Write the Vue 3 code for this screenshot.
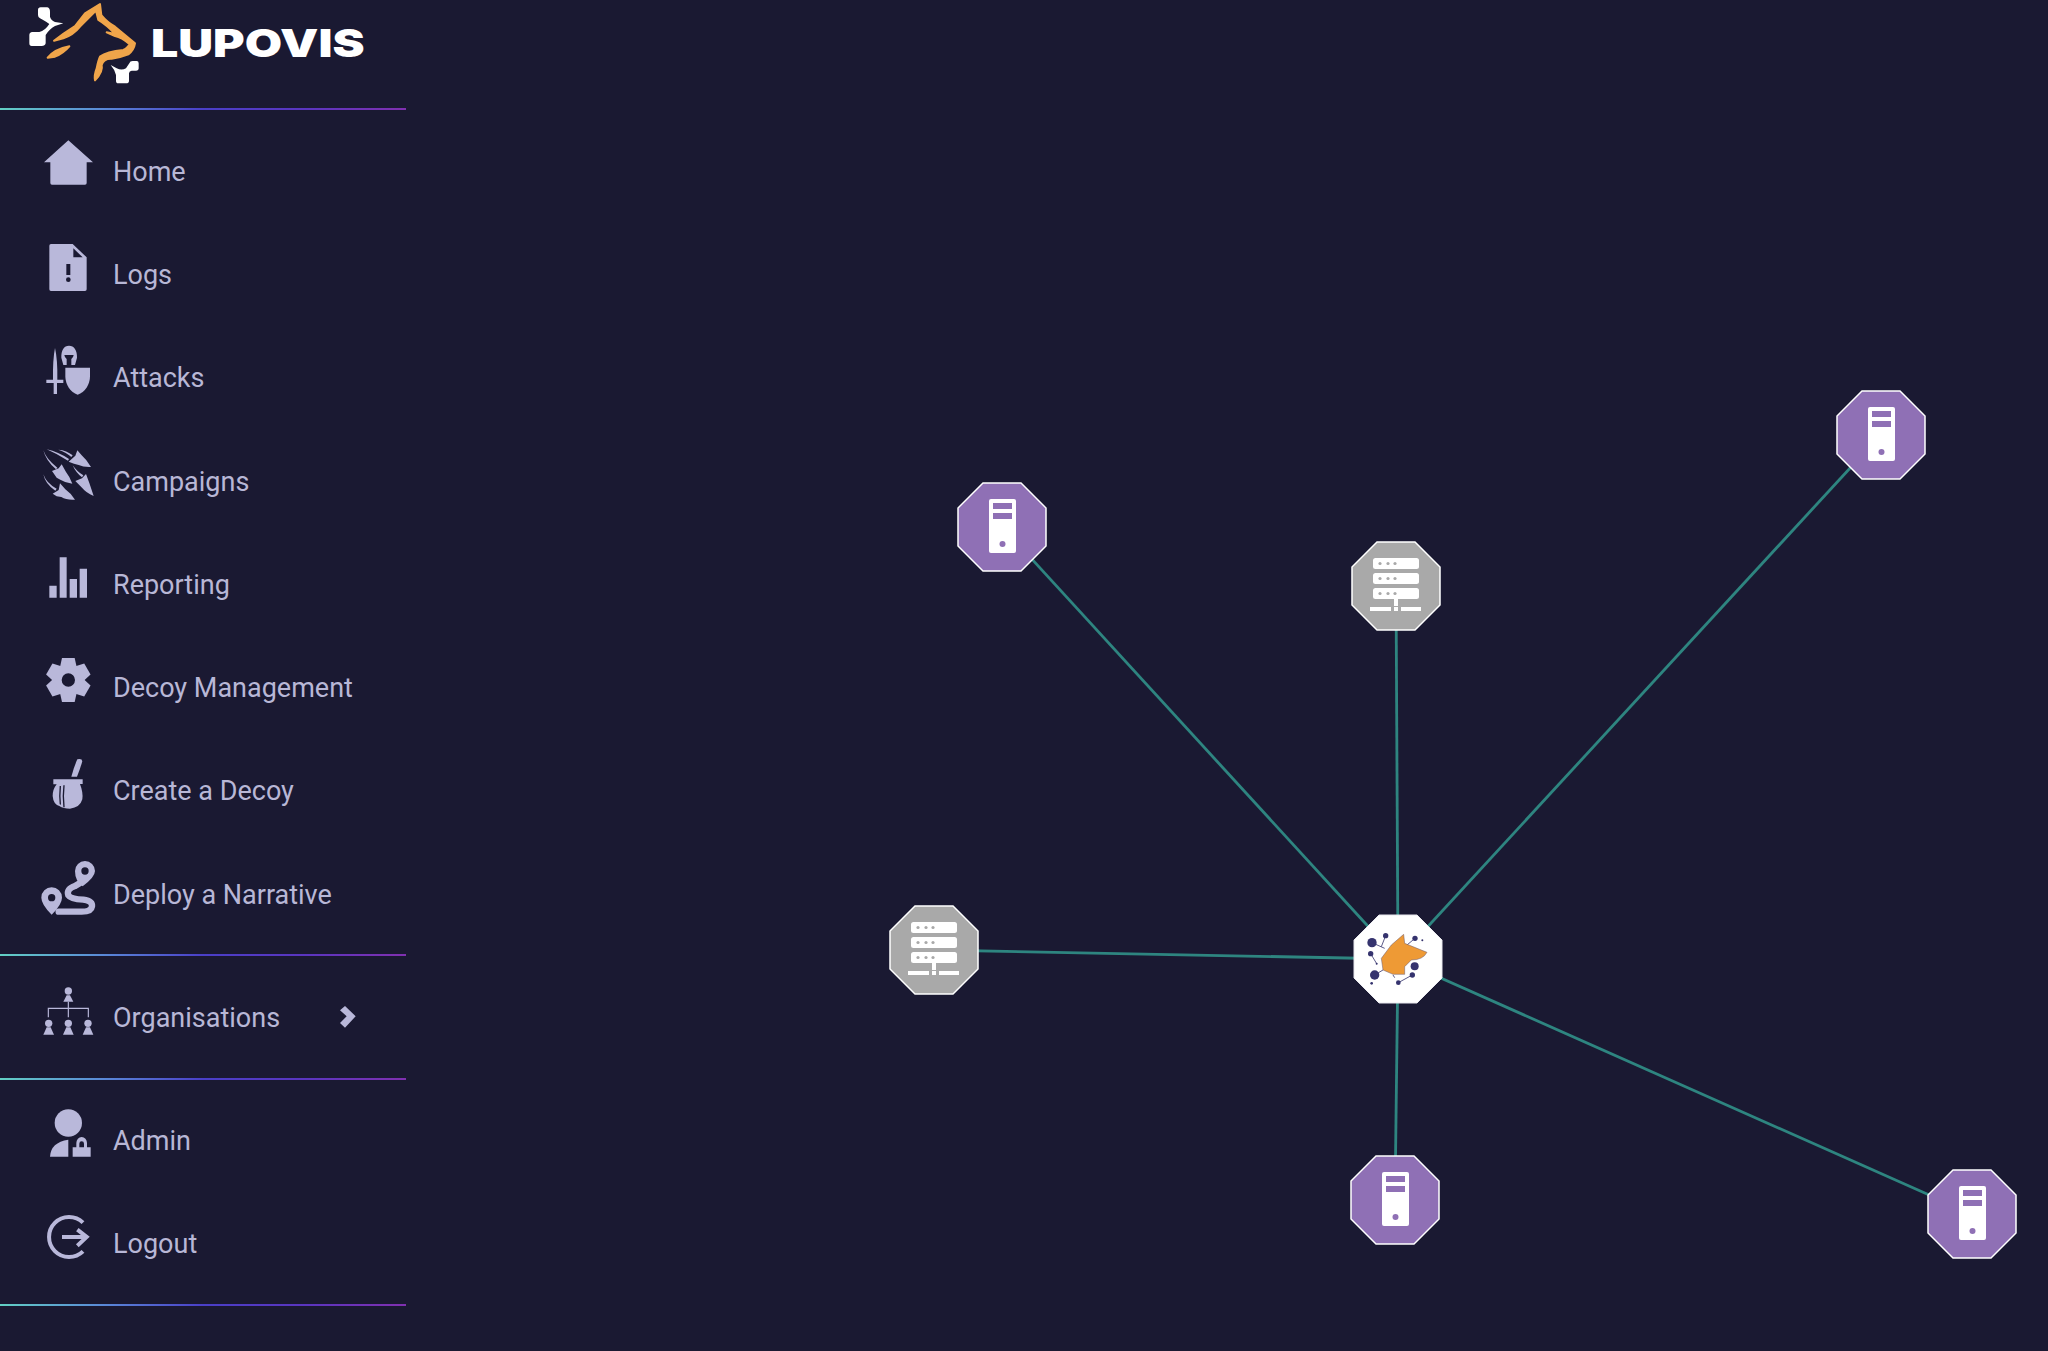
<template>
  <div class="app">
    <aside class="sidebar">
      <header class="brand">
        <svg class="brand-mark" viewBox="0 0 420 270">
          <path class="mark-white" d="M122 22H142Q150 24 150 35V50Q152 60 165 66L190 70L165 78Q150 85 137 105V130Q135 138 125 138H95Q88 138 88 130V105Q88 97 97 96H118Q135 92 148 72Q130 60 120 55Q114 52 114 45V30Q114 22 122 22Z" />
          <path class="mark-white" d="M332 195L350 205Q365 212 378 205L388 190Q390 183 398 183H410Q416 183 416 190V205Q416 212 408 212H395Q388 212 387 220V242Q387 250 378 250H355Q348 250 348 242V225Q345 210 332 195Z" />
          <path class="mark-orange" d="M162 122Q190 100 225 78L255 40L300 12L304 45Q320 65 345 80L405 130Q402 150 385 163Q360 173 335 176Q310 175 305 195Q310 215 285 241Q282 225 290 205Q295 180 300 170Q320 155 370 150Q385 142 388 132Q365 112 345 108L320 97L345 102Q320 75 295 60L288 32L240 80Q220 105 190 115Z" />
          <path class="mark-orange" d="M143 173Q165 147 208 139Q190 160 165 170Z" />
        </svg>
        <span class="brand-name">LUPOVIS</span>
      </header>
      <div class="divider"></div>

      <nav class="nav nav-main">
        <a class="nav-row">
          <svg class="nav-icon" viewBox="114 398 180 180"><path d="M205 420L279 486H260V548Q260 553 255 553H156Q151 553 151 548V486H132Z" /></svg>
          <span>Home</span>
        </a>
        <a class="nav-row">
          <svg class="nav-icon" viewBox="114 708 180 180"><path fill-rule="evenodd" d="M153 732H218L260 772V868Q260 873 255 873H153Q148 873 148 868V737Q148 732 153 732ZM220 745V772H248ZM199 792V825H211V792ZM205 832A7 7 0 1 0 205 846A7 7 0 1 0 205 832Z" /></svg>
          <span>Logs</span>
        </a>
        <a class="nav-row">
          <svg class="nav-icon" viewBox="114 28 180 180">
            <path d="M165 55Q173 90 172 150H190V160H171V193H161V160H139V150H159Q158 90 165 55Z" />
            <path fill-rule="evenodd" d="M207 48C222 48 232 62 231 84L225 106H214V88Q220 84 221 76H193Q194 84 200 88V106H190L184 84C183 62 192 48 207 48Z" />
            <path d="M196 114H270V140C270 165 255 188 233 195C211 188 196 165 196 140Z" />
          </svg>
          <span>Attacks</span>
        </a>
        <a class="nav-row">
          <svg class="nav-icon" viewBox="114 338 180 180">
            <path d="M206 394L226 376L232 360L245 375Q260 388 273 410Q250 411 236 404L222 400Z" />
            <path d="M175 358Q200 360 218 375L214 380Q200 366 175 358Z" />
            <path d="M140 357Q175 365 207 386L204 391Q170 370 140 357Z" />
            <path d="M156 422L176 414L185 402L198 425Q210 440 217 460Q195 457 181 448L170 442Z" />
            <path d="M130 360Q140 388 172 412L168 417Q138 392 130 360Z" />
            <path d="M226 452L246 444L258 431L268 458L281 497Q258 487 246 472Z" />
            <path d="M218 405Q232 425 250 435L246 441Q228 428 218 405Z" />
            <path d="M158 490L176 479L180 459L196 477Q214 490 225 508Q200 510 184 500L170 498Z" />
            <path d="M130 432Q140 460 170 475L166 481Q136 462 130 432Z" />
          </svg>
          <span>Campaigns</span>
        </a>
        <a class="nav-row">
          <svg class="nav-icon" viewBox="114 648 180 180">
            <path d="M148 767H170V803H148ZM179 682H200V803H179ZM209 747H231V803H209ZM239 716H261V803H239Z" />
          </svg>
          <span>Reporting</span>
        </a>
        <a class="nav-row">
          <svg class="nav-icon" viewBox="114 58 180 180">
            <circle class="ring" cx="205" cy="151" r="34" />
            <polygon v-for="a in [0, 60, 120, 180, 240, 300]" :key="a" points="186,85 224,85 230,112 180,112" :transform="`rotate(${a} 205 151)`" />
          </svg>
          <span>Decoy Management</span>
        </a>
        <a class="nav-row">
          <svg class="nav-icon" viewBox="114 368 180 180">
            <path d="M232 390Q246 386 247 396Q240 420 231 442H214Q222 412 232 390Z" />
            <path fill-rule="evenodd" d="M160 450H248V464H240Q250 490 247 510Q240 535 210 538Q190 538 178 530Q160 525 158 500Q158 480 170 465H160ZM179 470Q176 500 179 525L183 526Q180 500 183 470ZM190 468Q186 500 190 534L194 534Q190 500 194 468Z" />
          </svg>
          <span>Create a Decoy</span>
        </a>
        <a class="nav-row">
          <svg class="nav-icon" viewBox="114 677 180 180">
            <path fill-rule="evenodd" d="M155 771A31 31 0 0 1 186 802Q186 822 155 853Q124 822 124 802A31 31 0 0 1 155 771ZM155 791A11 11 0 1 0 155 813A11 11 0 1 0 155 791Z" />
            <path fill-rule="evenodd" d="M255 692A30 30 0 0 1 285 722Q285 740 248 768Q225 752 225 722A30 30 0 0 1 255 692ZM255 711A11 11 0 1 0 255 733A11 11 0 1 0 255 711Z" />
            <path class="route" d="M245 755L225 767Q198 776 205 795Q212 806 250 808Q278 812 276 828Q274 844 245 844H176" />
          </svg>
          <span>Deploy a Narrative</span>
        </a>
      </nav>
      <div class="divider"></div>

      <nav class="nav nav-org">
        <a class="nav-row">
          <svg class="nav-icon" viewBox="114 147 180 180">
            <circle cx="205" cy="183" r="11" />
            <path d="M190 215L200 196H210L220 215Z" />
            <path class="tree" d="M205 215V262M145 262V235H265V262" />
            <g v-for="x in [146, 205, 264]" :key="x">
              <circle :cx="x" cy="280" r="11" />
              <path :d="`M${x - 16} 314L${x - 6} 292H${x + 6}L${x + 16} 314Z`" />
            </g>
          </svg>
          <span>Organisations</span>
          <svg class="chevron" viewBox="1020 232 48 66"><path d="M1020 245L1035 232L1067 263L1035 297L1020 283L1040 263Z" /></svg>
        </a>
      </nav>
      <div class="divider"></div>

      <nav class="nav nav-bottom">
        <a class="nav-row">
          <svg class="nav-icon" viewBox="114 514 180 180">
            <circle cx="205" cy="577" r="41" />
            <path d="M150 678Q152 635 205 627V678Z" />
            <path fill-rule="evenodd" d="M218 678V650H229V637A16 18 0 0 1 261 637V650H272V678ZM238 650H252V639A7 7 0 0 0 238 639Z" />
          </svg>
          <span>Admin</span>
        </a>
        <a class="nav-row">
          <svg class="nav-icon" viewBox="114 824 180 180">
            <path class="logout" d="M249 877A60 60 0 1 0 249 963" />
            <path class="logout" d="M186 920H256M232 898L260 920L232 946" />
          </svg>
          <span>Logout</span>
        </a>
      </nav>
      <div class="divider"></div>
    </aside>

    <main class="graph">
      <svg class="edges">
        <line v-for="n in leaves" :key="n.id" :x1="hub.x" :y1="hub.y" :x2="n.x" :y2="n.y" />
      </svg>
      <div v-for="n in leaves" :key="n.id" class="node" :style="nodeStyle(n)">
        <svg viewBox="0 0 90 90">
          <polygon :class="n.type" :points="octagon" />
          <g v-if="n.type === 'host'">
            <rect class="white" x="32" y="17" width="27" height="54" rx="2" />
            <rect class="slot" x="36" y="21" width="19" height="6" />
            <rect class="slot" x="36" y="31" width="19" height="6" />
            <circle class="slot" cx="45.5" cy="62" r="3" />
          </g>
          <g v-else>
            <rect v-for="y in [17, 32, 47]" :key="y" class="white" x="22" :y="y" width="46" height="11" rx="2.5" />
            <g v-for="y in [22.5, 37.5, 52.5]" :key="'d' + y">
              <circle class="dot" cx="29" :cy="y" r="1.6" />
              <circle class="dot" cx="37" :cy="y" r="1.6" />
              <circle class="dot" cx="44" :cy="y" r="1.6" />
            </g>
            <rect class="white" x="43" y="57" width="4" height="8" />
            <rect class="white" x="19" y="66" width="21" height="4" />
            <rect class="white" x="43" y="66" width="4" height="4" />
            <rect class="white" x="50" y="66" width="20" height="4" />
          </g>
        </svg>
      </div>
      <div class="node" :style="nodeStyle(hub)">
        <svg viewBox="0 0 90 90">
          <polygon class="hub" :points="octagon" />
          <g transform="scale(0.3333) translate(-70 -57)">
            <path class="hub-line" d="M127 143L165 160M168 122L155 155M123 176L141 206M135 240L160 225M248 240L206 263M256 130L232 150M190 240L195 248" />
            <path class="wolf" d="M155 190L185 150L222 118L225 145L292 172Q280 195 245 195L225 215L225 238L190 238L160 225Z" />
            <circle v-for="(d, i) in hubDots" :key="i" class="hub-dot" :cx="d[0]" :cy="d[1]" :r="d[2]" />
          </g>
        </svg>
      </div>
    </main>
  </div>
</template>

<script setup>
const sidebarWidth = 406
const octagon = '26,1 64,1 89,26 89,64 64,89 26,89 1,64 1,26'

// positions are relative to the graph area
const hub = { x: 1398 - sidebarWidth, y: 959 }
const leaves = [
  { id: 1, type: 'host', x: 1002 - sidebarWidth, y: 526.5 },
  { id: 2, type: 'server', x: 1396 - sidebarWidth, y: 585.5 },
  { id: 3, type: 'host', x: 1881 - sidebarWidth, y: 434.5 },
  { id: 4, type: 'server', x: 934 - sidebarWidth, y: 950 },
  { id: 5, type: 'host', x: 1395 - sidebarWidth, y: 1199.5 },
  { id: 6, type: 'host', x: 1972 - sidebarWidth, y: 1214 }
]

const hubDots = [
  [127, 143, 14], [168, 122, 8], [123, 176, 8], [135, 240, 14], [255, 214, 12], [248, 240, 8],
  [206, 263, 7], [256, 130, 8], [126, 265, 4], [278, 136, 3], [141, 206, 3]
]

function nodeStyle(n) {
  return { left: `${n.x - 45}px`, top: `${n.y - 45}px` }
}
</script>

<style>
html, body {
  margin: 0;
  background: #1a1932;
}
</style>

<style scoped>
.app {
  display: flex;
  width: 2048px;
  height: 1351px;
  overflow: hidden;
  background: #1a1932;
  font-family: Roboto, "Noto Sans", sans-serif;
}

.sidebar {
  width: 406px;
  flex-shrink: 0;
  display: flex;
  flex-direction: column;
}

.brand {
  height: 108.3px;
  display: flex;
  align-items: flex-start;
}

.brand-mark {
  width: 140px;
  height: 90px;
  flex-shrink: 0;
}

.brand-name {
  margin: 18px 0 0 11px;
  font-family: Inter, sans-serif;
  font-size: 38px;
  line-height: 50px;
  font-weight: 900;
  color: #fff;
  transform: scaleX(1.27);
  transform-origin: left center;
}

.mark-white { fill: #fff; }
.mark-orange { fill: #f0a54a; stroke: #f0a54a; stroke-width: 6; stroke-linejoin: round; }

.divider {
  height: 2px;
  background: linear-gradient(90deg, #62d0c4 0%, #5a8ad8 25%, #4a3fc8 50%, #5a35c0 75%, #8030b0 100%);
}

.nav {
  display: flex;
  flex-direction: column;
}

.nav-main { padding: 8.7px 0 8.9px; }
.nav-org { padding: 9.1px 0 9px; }
.nav-bottom { padding: 8.5px 0 9.5px; }

.nav-row {
  height: 103.3px;
  display: flex;
  align-items: center;
  padding-left: 38px;
  gap: 15px;
  color: #b8b7d6;
  font-size: 27px;
}

.nav-row span {
  margin-top: 2px;
}

.nav-icon {
  width: 60px;
  height: 60px;
  flex-shrink: 0;
  margin-bottom: 16px;
  fill: #b9b8da;
}

.ring {
  fill: none;
  stroke: #b9b8da;
  stroke-width: 28;
}

.route {
  fill: none;
  stroke: #b9b8da;
  stroke-width: 19;
  stroke-linecap: round;
}

.tree {
  fill: none;
  stroke: #b9b8da;
  stroke-width: 3.5;
}

.logout {
  fill: none;
  stroke: #b9b8da;
  stroke-width: 12;
}

.chevron {
  width: 16px;
  height: 22px;
  margin-left: auto;
  margin-right: 50px;
  fill: #b9b8da;
}

.graph {
  flex: 1;
  position: relative;
}

.edges {
  position: absolute;
  inset: 0;
  width: 100%;
  height: 100%;
}

.edges line {
  stroke: #2e8580;
  stroke-width: 2.8;
}

.node {
  position: absolute;
  width: 90px;
  height: 90px;
}

.node svg {
  display: block;
  width: 90px;
  height: 90px;
}

.host { fill: #8f70b5; stroke: #fff; stroke-width: 1.5; }
.server { fill: #a9a9a9; stroke: #fff; stroke-width: 1.5; }
.hub { fill: #fff; stroke: #e8e8ee; stroke-width: 1; }
.white { fill: #fff; }
.slot { fill: #8f70b5; }
.dot { fill: #a9a9a9; }
.wolf { fill: #ee9a35; stroke: #6a5a70; stroke-width: 1.5; }
.hub-dot { fill: #35336e; }
.hub-line { fill: none; stroke: #3a3870; stroke-width: 2.5; }
</style>
